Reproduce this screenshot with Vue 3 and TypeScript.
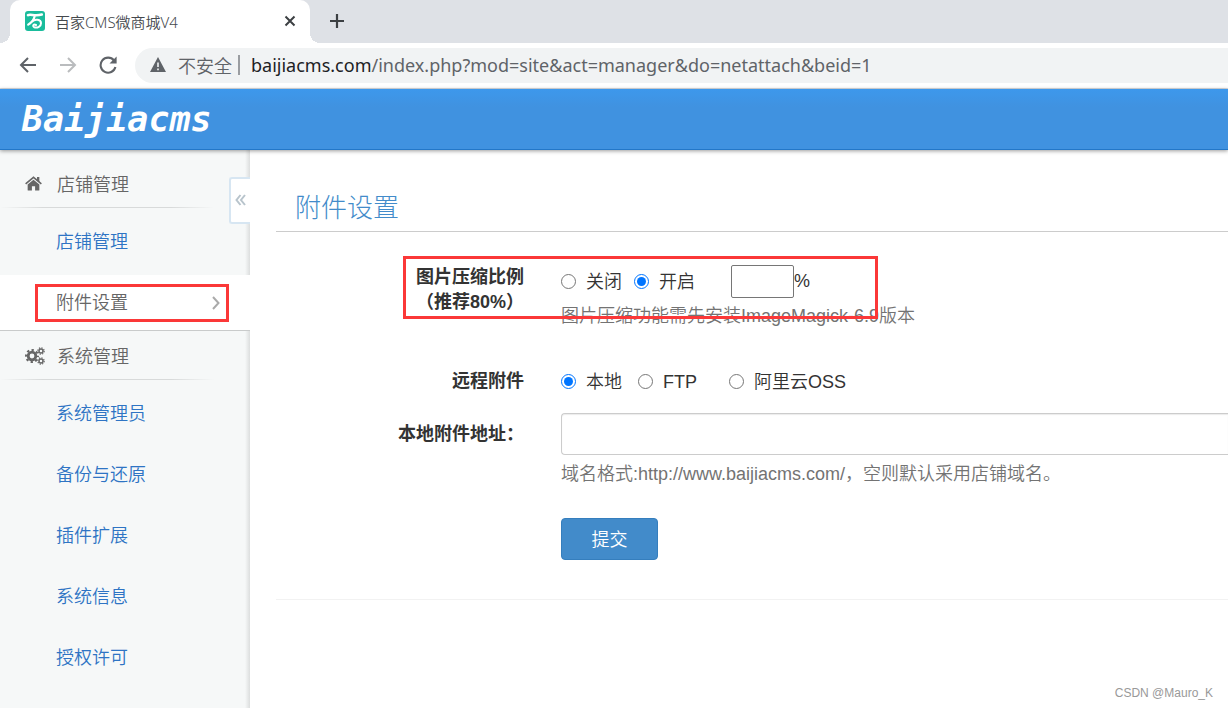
<script setup lang="ts">
import { ref } from 'vue'

interface MenuItem {
  label: string
  active?: boolean
}
interface MenuSection {
  title: string
  icon: 'home' | 'cogs'
  items: MenuItem[]
}

const sections: MenuSection[] = [
  {
    title: '店铺管理',
    icon: 'home',
    items: [{ label: '店铺管理' }, { label: '附件设置', active: true }],
  },
  {
    title: '系统管理',
    icon: 'cogs',
    items: [
      { label: '系统管理员' },
      { label: '备份与还原' },
      { label: '插件扩展' },
      { label: '系统信息' },
      { label: '授权许可' },
    ],
  },
]

const compress = ref('on')
const percent = ref('')
const storage = ref('local')
const attachUrl = ref('')
</script>

<template>
  <div class="window">
    <div class="tabstrip">
      <div class="tab">
        <svg class="favicon" viewBox="0 0 20 20" aria-hidden="true">
          <rect width="20" height="20" rx="3" fill="#1abc9c" />
          <g fill="none" stroke="#fff" stroke-linecap="round" stroke-linejoin="round">
            <path d="M3 4.200C6 2.600 9 5.600 16.800 3.600" stroke-width="2.600" />
            <path d="M9.600 5.500C9 8.500 6.500 11.500 3.200 13.600" stroke-width="2.200" />
            <path d="M7 10.600C10 7.600 16 8.400 16 12.200C16 15.400 12.500 17.200 9.200 16.200C7.200 15 8.600 12.800 11 14" stroke-width="2" />
          </g>
        </svg>
        <span class="tab-title">百家CMS微商城V4</span>
        <button class="icon-btn close" type="button" aria-label="关闭标签页">
          <svg width="12" height="12" viewBox="0 0 12 12"><path d="M1.500 1.500L10.500 10.500M10.500 1.500L1.500 10.500" stroke="#3c4043" stroke-width="2" /></svg>
        </button>
      </div>
      <button class="icon-btn add" type="button" aria-label="新标签页">
        <svg width="16" height="16" viewBox="0 0 16 16"><path d="M8 1V15M1 8H15" stroke="#3c4043" stroke-width="2.200" /></svg>
      </button>
    </div>

    <div class="toolbar">
      <button class="icon-btn" type="button" aria-label="后退">
        <svg width="18" height="18" viewBox="0 0 18 18" fill="none" stroke="#5f6368" stroke-width="2"><path d="M17 9H2.500M9 2L2 9L9 16" /></svg>
      </button>
      <button class="icon-btn" type="button" aria-label="前进">
        <svg width="18" height="18" viewBox="0 0 18 18" fill="none" stroke="#babcbe" stroke-width="2"><path d="M1 9H15.500M9 2L16 9L9 16" /></svg>
      </button>
      <button class="icon-btn" type="button" aria-label="重新加载">
        <svg width="18" height="18" viewBox="0 0 18 18"><path d="M15 4.500A7.500 7.500 0 1 0 16.400 11" fill="none" stroke="#5f6368" stroke-width="2.100" /><path d="M17.600 0.500V7.600H10.500Z" fill="#5f6368" /></svg>
      </button>
      <div class="omnibox">
        <svg class="warn" width="16" height="15" viewBox="0 0 16 15"><path d="M8 0L16 15H0Z" fill="#5f6368" /><path d="M8 5.500V10M8 11.500V13.300" stroke="#f1f3f4" stroke-width="1.600" /></svg>
        <span class="insecure">不安全</span>
        <span class="bar"></span>
        <span class="url"><b>baijiacms.com</b>/index.php?mod=site&amp;act=manager&amp;do=netattach&amp;beid=1</span>
      </div>
    </div>

    <header class="header"><span class="brand">Baijiacms</span></header>

    <div class="body">
      <nav class="sidebar">
        <section v-for="s in sections" :key="s.title" class="section">
          <h2 class="section-head">
            <svg v-if="s.icon === 'home'" class="section-icon" width="17" height="15" viewBox="0 0 16 14">
              <path d="M8 3.500L2.500 8V13.200Q2.500 13.700 3 13.700H6.500V9.700H9.500V13.700H13Q13.500 13.700 13.500 13.200V8Z" fill="#666" />
              <path d="M0.600 7.300L8 1.200L15.400 7.300" fill="none" stroke="#666" stroke-width="1.500" />
              <path d="M11.300 0.800H13.500V5.500L11.300 3.700Z" fill="#666" />
            </svg>
            <svg v-else class="section-icon" width="20" height="18" viewBox="0 0 20 18" fill="none" stroke="#666">
              <circle cx="7" cy="9" r="3.800" stroke-width="2.800" />
              <circle cx="7" cy="9" r="6" stroke-width="2" stroke-dasharray="2.356 2.356" stroke-dashoffset="1.178" />
              <circle cx="16" cy="4" r="2" stroke-width="1.500" />
              <circle cx="16" cy="4" r="3.200" stroke-width="1.200" stroke-dasharray="1.257 1.257" />
              <circle cx="16" cy="14" r="2" stroke-width="1.500" />
              <circle cx="16" cy="14" r="3.200" stroke-width="1.200" stroke-dasharray="1.257 1.257" />
            </svg>
            <span>{{ s.title }}</span>
          </h2>
          <ul class="menu">
            <li v-for="item in s.items" :key="item.label" :class="{ active: item.active }">
              <a href="#">{{ item.label }}</a>
              <svg v-if="item.active" class="chevron" width="8" height="14" viewBox="0 0 8 14"><path d="M1 1L6.500 7L1 13" fill="none" stroke="#aaa" stroke-width="2" /></svg>
              <span v-if="item.active" class="mark mark-menu"></span>
            </li>
          </ul>
        </section>
        <button class="collapse" type="button" aria-label="收起菜单">
          <svg width="11" height="12" viewBox="0 0 11 12" fill="none" stroke="#b8c4cc" stroke-width="2"><path d="M5.500 1L1.500 6L5.500 11M10 1L6 6L10 11" /></svg>
        </button>
      </nav>

      <main class="content">
        <h1 class="title">附件设置</h1>
        <form class="form" @submit.prevent>
          <div class="row row-ratio">
            <label class="label" for="percent">图片压缩比例<br />（推荐80%）</label>
            <div class="field">
              <div class="options">
                <label class="option"><input v-model="compress" type="radio" name="compress" value="off" />关闭</label>
                <label class="option"><input v-model="compress" type="radio" name="compress" value="on" />开启</label>
                <input id="percent" v-model="percent" class="percent" type="text" /><span>%</span>
              </div>
              <p class="hint">图片压缩功能需先安装ImageMagick-6.9版本</p>
            </div>
            <span class="mark mark-form"></span>
          </div>

          <div class="row row-storage">
            <span id="storage-label" class="label">远程附件</span>
            <div class="field options" role="radiogroup" aria-labelledby="storage-label">
              <label class="option"><input v-model="storage" type="radio" name="storage" value="local" />本地</label>
              <label class="option ftp"><input v-model="storage" type="radio" name="storage" value="ftp" />FTP</label>
              <label class="option"><input v-model="storage" type="radio" name="storage" value="oss" />阿里云OSS</label>
            </div>
          </div>

          <div class="row row-url">
            <label class="label" for="attach-url">本地附件地址：</label>
            <div class="field">
              <input id="attach-url" v-model="attachUrl" class="url-input" type="text" />
              <p class="hint">域名格式:http://www.baijiacms.com/，空则默认采用店铺域名。</p>
            </div>
          </div>

          <div class="row row-submit">
            <span></span>
            <button class="submit" type="submit">提交</button>
          </div>
        </form>
      </main>
    </div>
    <div class="watermark">CSDN @Mauro_K</div>
  </div>
</template>

<style>
html,
body {
  background: #fff;
}
</style>

<style scoped>
.window {
  position: relative;
  display: flex;
  flex-direction: column;
  min-height: 100vh;
  overflow: hidden;
  color: #333;
  font-family: "Liberation Sans", "Noto Sans CJK SC", sans-serif;
  font-size: 18px;
}
.window *,
.window *::before,
.window *::after {
  box-sizing: border-box;
}
h1,
h2,
ul,
p {
  margin: 0;
  padding: 0;
  font-weight: 350;
}
button {
  font-family: inherit;
}
svg {
  display: block;
  flex: none;
}
.icon-btn {
  display: flex;
  padding: 0;
  border: 0;
  background: none;
}

.tabstrip {
  display: flex;
  align-items: center;
  gap: 19px;
  height: 43px;
  padding-left: 10px;
  background: #dee1e6;
}
.tab {
  position: relative;
  display: flex;
  align-items: center;
  width: 300px;
  height: 43px;
  padding: 0 14px 1px 15px;
  border-radius: 10px 10px 0 0;
  background: #fff;
}
.add {
  margin-bottom: 2px;
}
.tab::before,
.tab::after {
  position: absolute;
  bottom: 0;
  width: 10px;
  height: 10px;
  content: "";
}
.tab::before {
  left: -10px;
  background: radial-gradient(circle at 0 0, #dee1e6 10px, #fff 10px);
}
.tab::after {
  right: -10px;
  background: radial-gradient(circle at 100% 0, #dee1e6 10px, #fff 10px);
}
.favicon {
  width: 20px;
  height: 20px;
}
.tab-title {
  flex: 1;
  margin-left: 10px;
  color: #45494d;
  font-family: "Noto Sans", "Noto Sans CJK SC", sans-serif;
  font-size: 15px;
  font-weight: 350;
}

.toolbar {
  display: flex;
  align-items: center;
  gap: 22px;
  height: 46px;
  padding-left: 19px;
  border-bottom: 1px solid #dadce0;
}
.toolbar .icon-btn {
  margin-bottom: 2px;
}
.omnibox {
  display: flex;
  flex: 1;
  align-items: center;
  height: 35px;
  margin-left: -4px;
  padding: 0 0 2px 15px;
  border-radius: 18px 0 0 18px;
  background: #f1f3f4;
  color: #5f6368;
  font-family: "Noto Sans", "Noto Sans CJK SC", sans-serif;
  font-size: 18px;
  white-space: nowrap;
}
.insecure {
  margin-left: 12px;
  font-weight: 350;
}
.bar {
  width: 2px;
  height: 20px;
  margin: 0 11px 0 6px;
  background: #9a9da1;
}
.url b {
  color: #202124;
  font-weight: 400;
}

.header {
  position: relative;
  z-index: 2;
  display: flex;
  align-items: center;
  height: 61px;
  padding-left: 22px;
  border-bottom: 1px solid #2377c8;
  background: linear-gradient(#3d98ec, #4092e0 30%);
  box-shadow: 0 1px 4px rgba(0, 0, 0, 0.4);
}
.brand {
  color: #fff;
  font-family: "DejaVu Sans Mono", monospace;
  font-size: 35px;
  font-style: italic;
  font-weight: 700;
  line-height: 40px;
}

.body {
  display: flex;
  flex: 1;
}
.sidebar {
  position: relative;
  flex: none;
  width: 250px;
  padding-top: 11px;
  background: linear-gradient(to left, #dcdede, #f6f8f8 5px);
}
.section + .section {
  padding-top: 2px;
}
.section-head {
  display: grid;
  grid-template-columns: 32px 1fr;
  align-items: center;
  width: 214px;
  height: 47px;
  padding: 0 0 4px 25px;
  background: linear-gradient(to right, transparent, #d8dada 20%, #d8dada 80%, transparent) bottom / 100% 1px no-repeat;
  color: #666;
  font-size: 18px;
}
.section-icon {
  margin-top: 2px;
}
.menu {
  display: flex;
  flex-direction: column;
  gap: 6px;
  padding-top: 6px;
  list-style: none;
}
.menu li {
  position: relative;
  display: flex;
  align-items: center;
  height: 55px;
  padding: 0 30px 3px 56px;
}
.menu a {
  flex: 1;
  color: #2e74c4;
  font-weight: 350;
  text-decoration: none;
}
.menu li.active {
  height: 56px;
  border-bottom: 1px solid #c9cbcb;
  background: #fff;
}
.menu li.active a {
  color: #666;
}
.chevron {
  margin-top: 3px;
}
.mark {
  position: absolute;
  border: 3px solid #fb3838;
  pointer-events: none;
}
.mark-menu {
  inset: 9px 21px 8px 35px;
}
.collapse {
  position: absolute;
  top: 27px;
  right: 0;
  display: flex;
  align-items: center;
  justify-content: center;
  width: 21px;
  height: 47px;
  padding: 0 0 2px;
  border: 2px solid #d7e6f2;
  border-right: 0;
  border-radius: 3px 0 0 3px;
  background: #fff;
}

.content {
  flex: 1;
  min-width: 0;
  padding: 35px 0 0 26px;
}
.title {
  padding-left: 19px;
  border-bottom: 1px solid #ccc;
  color: #428bca;
  font-size: 26px;
  font-weight: 300;
  line-height: 46px;
}
.form {
  padding-bottom: 39px;
  border-bottom: 1px solid #f2f2f2;
}
.row {
  position: relative;
  display: grid;
  grid-template-columns: 248px 1fr;
  column-gap: 37px;
}
.label {
  font-weight: 700;
  line-height: 25px;
  text-align: right;
}
.options {
  display: flex;
  align-items: center;
}
.option {
  display: flex;
  align-items: center;
  margin-right: 12px;
  font-weight: 350;
  line-height: 24px;
}
.option input {
  width: 15px;
  height: 15px;
  margin: 0 10px 0 0;
}
.option.ftp {
  margin: 0 32px 0 4px;
}
.hint {
  color: #737373;
  line-height: 24px;
  white-space: nowrap;
}
.row-ratio {
  padding-top: 33px;
}
.percent {
  width: 63px;
  height: 33px;
  margin-left: 24px;
  border: 1px solid #767676;
  border-radius: 2px;
  font-size: 18px;
}
.row-ratio .hint {
  margin-top: 6px;
}
.mark-form {
  top: 24px;
  left: 127px;
  width: 475px;
  height: 63px;
}
.row-storage {
  padding-top: 41px;
}
.row-url {
  padding-top: 19px;
}
.row-url .label {
  padding-top: 9px;
}
.url-input {
  display: block;
  width: 100%;
  height: 42px;
  padding: 0 15px;
  border: 1px solid #ccc;
  border-right: 0;
  border-radius: 4px 0 0 4px;
  box-shadow: inset 0 1px 1px rgba(0, 0, 0, 0.08);
  font-size: 18px;
}
.row-url .hint {
  margin-top: 7px;
}
.row-submit {
  padding-top: 32px;
}
.submit {
  justify-self: start;
  width: 97px;
  height: 42px;
  padding: 0 0 2px;
  border: 1px solid #357ebd;
  border-radius: 4px;
  background: #428bca;
  color: #fff;
  font-size: 18px;
  font-weight: 350;
}
.watermark {
  position: absolute;
  right: 15px;
  bottom: 7px;
  color: #999;
  font-size: 12px;
  line-height: 16px;
}
</style>
